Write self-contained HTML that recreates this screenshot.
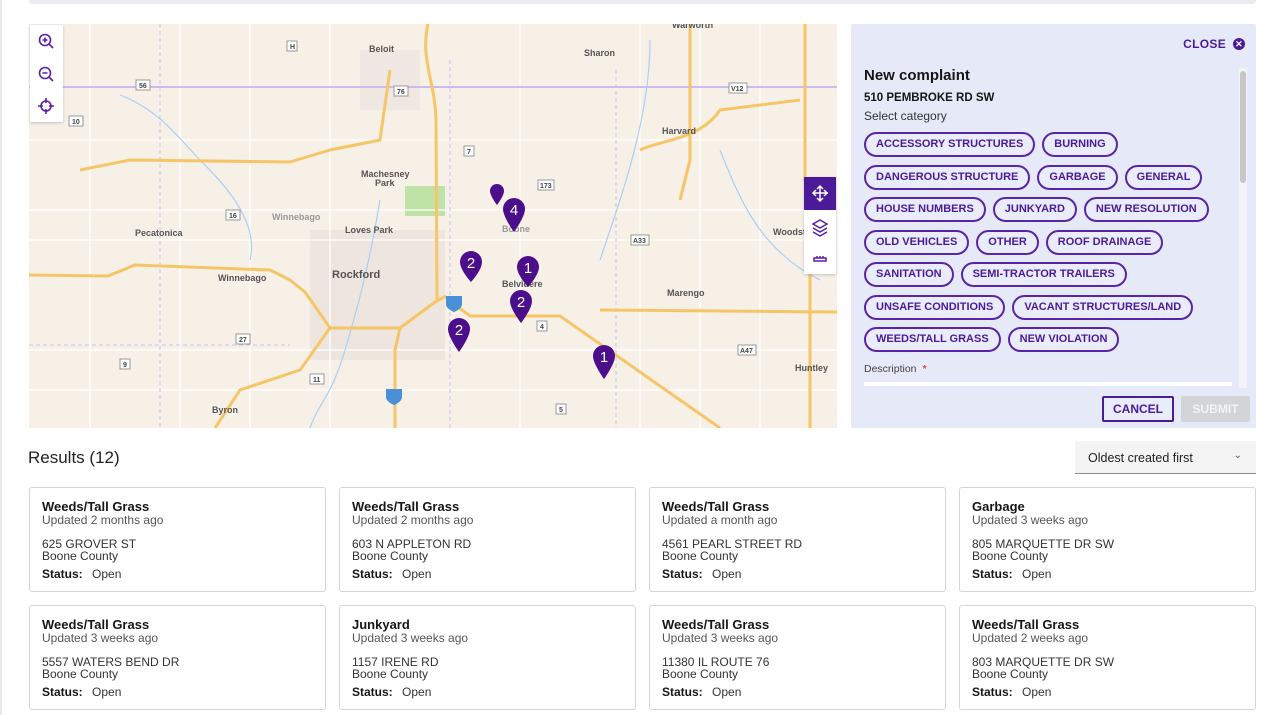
<!DOCTYPE html>
<html><head><meta charset="utf-8"><style>
*{box-sizing:border-box;margin:0;padding:0}
body{width:1280px;height:715px;overflow:hidden;background:#fff;font-family:"Liberation Sans",sans-serif;position:relative;color:#161616}
.topbar{position:absolute;left:29px;top:0;width:1227px;height:4px;background:#ececf0;border-radius:0 0 3px 3px}
.ledge{position:absolute;left:0;top:0;width:2px;height:715px;background:#ece6f6}
.map{position:absolute;left:29px;top:24px;width:808px;height:404px;overflow:hidden;background:#f6f0e7}
.zoomctl{position:absolute;left:30px;top:25px;width:33px;height:97px;background:#fff;box-shadow:0 1px 3px rgba(0,0,0,.2)}
.rctl{position:absolute;left:804px;top:177px;width:32px;height:97px;background:#fff;box-shadow:0 1px 3px rgba(0,0,0,.2)}
.panel{position:absolute;left:851px;top:24px;width:405px;height:404px;background:#e6eaf8;border-radius:2px}
.close{position:absolute;right:11px;top:13px;font-size:12px;font-weight:bold;color:#4b1a99;letter-spacing:.3px;display:flex;align-items:center;gap:7px}
.close i{display:inline-block;width:12px;height:12px;border-radius:50%;background:#4b1a99;color:#fff;font-style:normal;font-size:9px;line-height:12px;text-align:center}
h2{position:absolute;left:13px;top:43px;font-size:15px;font-weight:bold}
.addr{position:absolute;left:13px;top:68px;font-size:11.5px;font-weight:bold}
.sel{position:absolute;left:13px;top:85px;font-size:12px;color:#333}
.chips{position:absolute;left:13px;top:108px;width:360px}
.row{display:flex;gap:7px;height:25px;margin-bottom:7.5px}
.chip{height:25px;border:2px solid #5a24a8;border-radius:13px;padding:0 10px;font-size:11px;font-weight:bold;color:#4b1a99;line-height:21px;white-space:nowrap;background:#e9ecfa}
.desc{position:absolute;left:13px;top:339px;font-size:10.5px;color:#444}
.desc b{color:#e44;margin-left:6px}
.inp{position:absolute;left:13px;top:358px;width:368px;height:4px;background:#fff}
.sb{position:absolute;left:388px;top:44px;width:8px;height:320px;background:#f4f4f8}
.sb div{width:6px;margin-left:1px;height:112px;margin-top:3px;background:#c6c6c6;border-radius:3px}
.cancel{position:absolute;left:251px;top:372px;width:72px;height:26px;border:2px solid #4b1a99;border-radius:2px;font-size:12px;font-weight:bold;color:#4b1a99;text-align:center;line-height:22px;background:#e9ecfa}
.submit{position:absolute;left:330px;top:372px;width:69px;height:26px;background:#d3d4d8;border-radius:2px;font-size:12px;font-weight:bold;color:#f4f4f4;text-align:center;line-height:26px}
.res{position:absolute;left:28px;top:448px;font-size:17px;color:#222}
.dd{position:absolute;left:1075px;top:441px;width:181px;height:33px;background:#f4f4f4;border-bottom:1px solid #8d8d8d;font-size:12.5px;color:#222;padding:10px 0 0 13px}
.dd span{position:absolute;right:14px;top:9px;font-size:10px;color:#555}
.card{position:absolute;width:297px;height:105px;border:1px solid #d5d5d5;border-radius:3px;background:#fff;padding:12px 12px}
.card .t{font-size:13px;font-weight:bold;line-height:14px;color:#161616}
.card .u{font-size:12px;color:#555;line-height:13px}
.card .a{font-size:12px;color:#333;line-height:12px;margin-top:11px}
.card .s{font-size:12px;color:#333;margin-top:5px}
.card .s b{color:#161616;margin-right:6px}
</style></head><body>
<div class="ledge"></div>
<div class="topbar"></div>
<div class="map">
<svg width="808" height="404" viewBox="29 24 808 404" xmlns="http://www.w3.org/2000/svg" font-family="Liberation Sans" >
<rect x="29" y="24" width="808" height="404" fill="#f6f0e7"/>
<rect x="310" y="230" width="135" height="130" fill="#ede5de"/>
<rect x="360" y="50" width="60" height="60" fill="#efe8e2"/>
<rect x="405" y="186" width="40" height="30" fill="#bfe3a6"/>
<g stroke="#fff" stroke-width="1.3" fill="none">
<path d="M29 140H837M29 210H837M29 240H837M29 350H837M29 390H837M90 24V428M180 24V428M250 24V428M330 24V428M520 24V428M640 24V428M700 24V428M760 24V428"/>
</g>
<g stroke="#a9d0f5" stroke-width="1.2" fill="none">
<path d="M120 95C160 110 180 140 200 160S260 220 250 260"/><path d="M380 200C370 260 360 300 345 350S320 400 310 428"/><path d="M650 40C650 120 620 200 600 260"/><path d="M720 150C740 200 760 250 820 280"/>
</g>
<path d="M29 87H837" stroke="#cbbcf0" stroke-width="2"/>
<g stroke="#c9c2ee" stroke-width="1" stroke-dasharray="4 3" fill="none"><path d="M160 24V428M450 60V428M616 70V428M29 345H290"/></g>
<g stroke="#f6c567" stroke-width="3" fill="none" stroke-linejoin="round">
<path d="M29 275L108 276L135 265L270 270L290 280L305 292L330 328L400 328L435 302L446 296"/>
<path d="M428 24C420 60 435 80 436 120L437 300"/>
<path d="M400 328L395 350L395 428"/>
<path d="M446 298L470 316L560 316L720 428"/>
<path d="M805 24V180L810 190V428"/>
<path d="M80 170L130 160L290 162L330 150L380 140L390 70"/>
<path d="M330 328L300 370L240 390L215 428"/>
<path d="M640 150C660 140 700 140 720 110L800 100"/>
<path d="M600 310L837 312"/>
<path d="M690 24V160L680 200"/>
</g>
<g font-size="9" fill="#555" font-weight="bold">
<text x="369" y="52">Beloit</text><text x="584" y="56">Sharon</text><text x="672" y="28">Warworth</text><text x="662" y="134">Harvard</text>
<text x="361" y="177">Machesney</text><text x="375" y="186">Park</text><text x="345" y="233">Loves Park</text>
<text x="135" y="236">Pecatonica</text><text x="218" y="281">Winnebago</text><text x="332" y="278" font-size="11">Rockford</text>
<text x="272" y="220" fill="#999">Winnebago</text><text x="212" y="413">Byron</text><text x="502" y="232" fill="#999">Boone</text>
<text x="502" y="287">Belvidere</text><text x="667" y="296">Marengo</text><text x="795" y="371">Huntley</text><text x="773" y="235">Woodst</text>
</g>
<g font-size="7" fill="#444" font-weight="bold">
<rect x="287" y="41" width="10" height="10" fill="#fff" stroke="#999"/><text x="290" y="49">H</text>
<rect x="136" y="80" width="14" height="10" fill="#fff" stroke="#999"/><text x="139" y="88">56</text>
<rect x="69" y="116" width="14" height="10" fill="#fff" stroke="#999"/><text x="72" y="124">10</text>
<rect x="394" y="86" width="14" height="10" fill="#fff" stroke="#999"/><text x="397" y="94">76</text>
<rect x="464" y="146" width="10" height="10" fill="#fff" stroke="#999"/><text x="467" y="154">7</text>
<rect x="538" y="180" width="16" height="10" fill="#fff" stroke="#999"/><text x="540" y="188">173</text>
<rect x="631" y="235" width="18" height="10" fill="#fff" stroke="#999"/><text x="633" y="243">A33</text>
<rect x="729" y="83" width="18" height="10" fill="#fff" stroke="#999"/><text x="731" y="91">V12</text>
<rect x="226" y="210" width="14" height="10" fill="#fff" stroke="#999"/><text x="229" y="218">16</text>
<rect x="236" y="334" width="14" height="10" fill="#fff" stroke="#999"/><text x="239" y="342">27</text>
<rect x="120" y="359" width="10" height="10" fill="#fff" stroke="#999"/><text x="123" y="367">9</text>
<rect x="310" y="374" width="14" height="10" fill="#fff" stroke="#999"/><text x="313" y="382">11</text>
<rect x="537" y="321" width="10" height="10" fill="#fff" stroke="#999"/><text x="540" y="329">4</text>
<rect x="556" y="404" width="10" height="10" fill="#fff" stroke="#999"/><text x="559" y="412">5</text>
<rect x="738" y="345" width="18" height="10" fill="#fff" stroke="#999"/><text x="740" y="353">A47</text>
</g>
<path d="M446 296h16v8c0 5-8 8-8 8s-8-3-8-8z" fill="#4a90d9"/><path d="M386 389h16v8c0 5-8 8-8 8s-8-3-8-8z" fill="#4a90d9"/>
<g fill="#4b0f8c">
<path d="M497 184a7 7 0 0 1 7 7c0 5-7 14-7 14s-7-9-7-14a7 7 0 0 1 7-7z"/>
<path d="M514 198a11 11 0 0 1 11 11c0 8-11 23-11 23s-11-15-11-23a11 11 0 0 1 11-11z"/>
<path d="M471 251a11 11 0 0 1 11 11c0 8-11 20-11 20s-11-12-11-20a11 11 0 0 1 11-11z"/>
<path d="M528 256a11 11 0 0 1 11 11c0 8-11 20-11 20s-11-12-11-20a11 11 0 0 1 11-11z"/>
<path d="M521 290a11 11 0 0 1 11 11c0 8-11 22-11 22s-11-14-11-22a11 11 0 0 1 11-11z"/>
<path d="M459 318a11 11 0 0 1 11 11c0 8-11 23-11 23s-11-15-11-23a11 11 0 0 1 11-11z"/>
<path d="M604 345a11 11 0 0 1 11 11c0 8-11 23-11 23s-11-15-11-23a11 11 0 0 1 11-11z"/>
</g>
<g fill="#fff" font-size="15" text-anchor="middle">
<text x="514" y="215">4</text><text x="471" y="268">2</text><text x="528" y="273">1</text><text x="521" y="307">2</text><text x="459" y="335">2</text><text x="604" y="362">1</text>
</g>
</svg>
</div>
<div class="zoomctl">
<svg width="33" height="97" viewBox="0 0 33 97" fill="none" stroke="#5a1ea8" stroke-width="1.6">
<circle cx="15" cy="15" r="5.5"/><path d="M19 19l4 4M12.5 15h5M15 12.5v5"/>
<circle cx="15" cy="48" r="5.5"/><path d="M19 52l4 4M12.5 48h5"/>
<circle cx="16" cy="81" r="5"/><path d="M16 73v5M16 84v5M8 81h5M19 81h5"/>
</svg></div>
<div class="rctl">
<div style="height:33px;background:#4b1a99"></div>
<svg style="position:absolute;left:0;top:0" width="32" height="97" viewBox="0 0 32 97" fill="none" stroke-width="1.5">
<path d="M16 9v15M9 16h15M13 12l3-3 3 3M13 21l3 3 3-3M12 13l-3 3 3 3M20 13l3 3-3 3" stroke="#fff"/>
<path d="M16 43l7 4-7 4-7-4zM9 51l7 4 7-4M9 55l7 4 7-4" stroke="#5a1ea8"/>
<path d="M10 81h12v3H10zM13 81v-2M16 81v-2M19 81v-2" stroke="#5a1ea8"/>
</svg></div>
<div class="panel">
<div class="close">CLOSE <i>✕</i></div>
<h2>New complaint</h2>
<div class="addr">510 PEMBROKE RD SW</div>
<div class="sel">Select category</div>
<div class="chips">
<div class="row"><span class="chip">ACCESSORY STRUCTURES</span><span class="chip">BURNING</span></div>
<div class="row"><span class="chip">DANGEROUS STRUCTURE</span><span class="chip">GARBAGE</span><span class="chip">GENERAL</span></div>
<div class="row"><span class="chip">HOUSE NUMBERS</span><span class="chip">JUNKYARD</span><span class="chip">NEW RESOLUTION</span></div>
<div class="row"><span class="chip">OLD VEHICLES</span><span class="chip">OTHER</span><span class="chip">ROOF DRAINAGE</span></div>
<div class="row"><span class="chip">SANITATION</span><span class="chip">SEMI-TRACTOR TRAILERS</span></div>
<div class="row"><span class="chip">UNSAFE CONDITIONS</span><span class="chip">VACANT STRUCTURES/LAND</span></div>
<div class="row"><span class="chip">WEEDS/TALL GRASS</span><span class="chip">NEW VIOLATION</span></div>
</div>
<div class="desc">Description<b>*</b></div>
<div class="inp"></div>
<div class="sb"><div></div></div>
<div class="cancel">CANCEL</div>
<div class="submit">SUBMIT</div>
</div>
<div class="res">Results (12)</div>
<div class="dd">Oldest created first<span>&#8964;</span></div>

<div class="card" style="left:29px;top:487px"><div class="t">Weeds/Tall Grass</div><div class="u">Updated 2 months ago</div><div class="a">625 GROVER ST<br>Boone County</div><div class="s"><b>Status:</b> Open</div></div>
<div class="card" style="left:339px;top:487px"><div class="t">Weeds/Tall Grass</div><div class="u">Updated 2 months ago</div><div class="a">603 N APPLETON RD<br>Boone County</div><div class="s"><b>Status:</b> Open</div></div>
<div class="card" style="left:649px;top:487px"><div class="t">Weeds/Tall Grass</div><div class="u">Updated a month ago</div><div class="a">4561 PEARL STREET RD<br>Boone County</div><div class="s"><b>Status:</b> Open</div></div>
<div class="card" style="left:959px;top:487px"><div class="t">Garbage</div><div class="u">Updated 3 weeks ago</div><div class="a">805 MARQUETTE DR SW<br>Boone County</div><div class="s"><b>Status:</b> Open</div></div>
<div class="card" style="left:29px;top:605px"><div class="t">Weeds/Tall Grass</div><div class="u">Updated 3 weeks ago</div><div class="a">5557 WATERS BEND DR<br>Boone County</div><div class="s"><b>Status:</b> Open</div></div>
<div class="card" style="left:339px;top:605px"><div class="t">Junkyard</div><div class="u">Updated 3 weeks ago</div><div class="a">1157 IRENE RD<br>Boone County</div><div class="s"><b>Status:</b> Open</div></div>
<div class="card" style="left:649px;top:605px"><div class="t">Weeds/Tall Grass</div><div class="u">Updated 3 weeks ago</div><div class="a">11380 IL ROUTE 76<br>Boone County</div><div class="s"><b>Status:</b> Open</div></div>
<div class="card" style="left:959px;top:605px"><div class="t">Weeds/Tall Grass</div><div class="u">Updated 2 weeks ago</div><div class="a">803 MARQUETTE DR SW<br>Boone County</div><div class="s"><b>Status:</b> Open</div></div>
</body></html>
